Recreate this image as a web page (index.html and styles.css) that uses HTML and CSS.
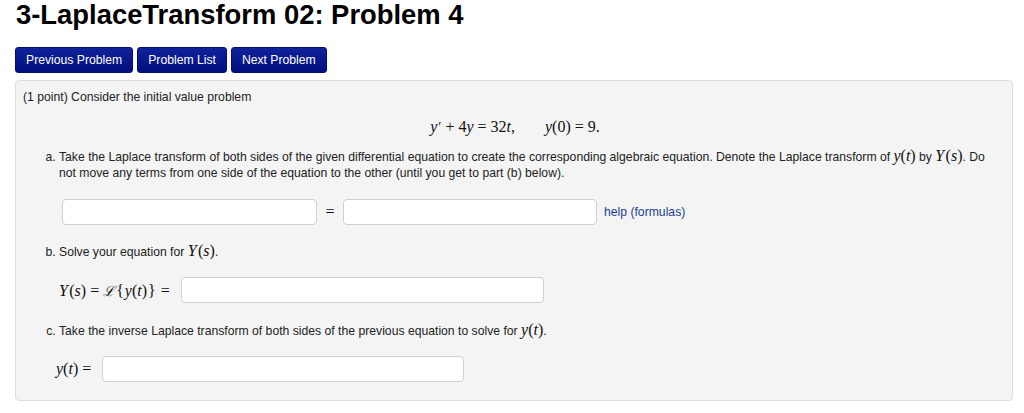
FILE: index.html
```html
<!DOCTYPE html>
<html>
<head>
<meta charset="utf-8">
<link rel="stylesheet" href="styles.css">
</head>
<body>
<h1 class="title">3-LaplaceTransform 02: Problem 4</h1>
<nav class="nav">
  <a class="btn" href="#">Previous Problem</a>
  <a class="btn" href="#">Problem List</a>
  <a class="btn" href="#">Next Problem</a>
</nav>
<div class="problem">
  <p class="intro">(1 point) Consider the initial value problem</p>
  <div class="display"><span class="mi">y</span><span class="prime">′</span><span class="op">+</span>4<span class="mi">y</span><span class="op">=</span>32<span class="mi">t</span>,<span class="qquad"></span><span class="mi">y</span>(0)<span class="op">=</span>9.</div>
  <ol class="parts">
    <li class="part-a">
      <p class="part-text">Take the Laplace transform of both sides of the given differential equation to create the corresponding algebraic equation. Denote the Laplace transform of <span class="math"><span class="mi">y</span>(<span class="mi">t</span>)</span> by <span class="math"><span class="mi">Y</span>&#8202;(<span class="mi">s</span>)</span>. Do not move any terms from one side of the equation to the other (until you get to part (b) below).</p>
      <div class="row row-a">
        <input class="ans ans-half" type="text">
        <span class="math eq">=</span>
        <input class="ans ans-half2" type="text">
        <a class="help" href="#">help (formulas)</a>
      </div>
    </li>
    <li class="part-b">
      <p class="part-text">Solve your equation for <span class="math"><span class="mi">Y</span>&#8202;(<span class="mi">s</span>)</span>.</p>
      <div class="row row-b">
        <span class="math lhs"><span class="mi">Y</span>&#8202;(<span class="mi">s</span>)<span class="op">=</span><span class="cal">ℒ</span><span class="brace">{</span><span class="mi">y</span>(<span class="mi">t</span>)<span class="brace">}</span><span class="op">=</span></span>
        <input class="ans ans-wide" type="text">
      </div>
    </li>
    <li class="part-c">
      <p class="part-text">Take the inverse Laplace transform of both sides of the previous equation to solve for <span class="math"><span class="mi">y</span>(<span class="mi">t</span>)</span>.</p>
      <div class="row row-c">
        <span class="math lhs"><span class="mi">y</span>(<span class="mi">t</span>)<span class="op">=</span></span>
        <input class="ans ans-wide2" type="text">
      </div>
    </li>
  </ol>
</div>
</body>
</html>
```
FILE: styles.css
```css
html, body {
  margin: 0;
  padding: 0;
  background: #ffffff;
}
body {
  padding: 0 11px 0 15px;
  font-family: "Liberation Sans", Arial, sans-serif;
  font-size: 12.2px;
  color: #222;
}
.title {
  margin: 0 0 0 1px;
  font-size: 27.4px;
  line-height: 30px;
  font-weight: bold;
  color: #000;
}
.nav {
  display: flex;
  gap: 4px;
  margin-top: 17px;
}
.btn {
  display: block;
  height: 24px;
  line-height: 24px;
  padding: 0 10px;
  border: 1px solid #020f72;
  border-radius: 3px;
  background: linear-gradient(to bottom, #10219a, #020f80);
  color: #fff;
  text-decoration: none;
  font-size: 12.2px;
}
.problem {
  margin-top: 7px;
  background: #f4f4f4;
  border: 1px solid #dedede;
  border-radius: 4px;
  padding: 8px 7px 18px 7px;
  box-sizing: border-box;
  height: 321px;
}
.intro {
  margin: 0;
  line-height: 16px;
}
.display {
  margin-top: 12px;
  line-height: 20px;
  text-align: center;
  font-family: "Liberation Serif", "Times New Roman", serif;
  font-size: 16px;
  color: #111;
  padding-left: 2px;
}
.mi {
  font-style: italic;
}
.prime {
  font-size: 14px;
  margin-left: 1px;
}
.op {
  margin: 0 4px;
}
.qquad {
  display: inline-block;
  width: 30px;
}
.math {
  font-family: "Liberation Serif", "Times New Roman", serif;
  font-size: 16px;
  color: #111;
}
.parts {
  margin: 10px 0 0 0;
  padding: 0 0 0 36px;
  list-style-type: lower-alpha;
}
.parts li {
  margin: 0 0 18px 0;
}
.parts li.part-b {
  margin-bottom: 19px;
}
.parts li:last-child {
  margin-bottom: 0;
}
.part-text {
  margin: 0;
  line-height: 16px;
  padding-right: 18px;
}
.row {
  display: flex;
  align-items: center;
  margin-top: 18px;
}
.row-a {
  margin-left: 3px;
}
.row-b {
  margin-top: 17px;
}
.row-c {
  margin-top: 17px;
  margin-left: -3px;
}
.ans {
  box-sizing: border-box;
  height: 26px;
  margin: 0;
  border: 1px solid #cfcfcf;
  border-radius: 4px;
  background: #fff;
  padding: 2px 6px;
  font-size: 12px;
}
.ans-half { width: 255px; }
.ans-half2 { width: 254px; }
.ans-wide { width: 363px; }
.ans-wide2 { width: 362px; }
.eq {
  width: 26px;
  text-align: center;
}
.help {
  margin-left: 7px;
  color: #1f3d8f;
  text-decoration: none;
}
.lhs {
  margin-right: 7px;
  white-space: nowrap;
}
.lhs .op {
  margin: 0 4px;
}
.cal {
  font-family: "DejaVu Serif", serif;
  font-style: italic;
  font-size: 14px;
}
.brace {
  margin: 0 1px;
}
```
